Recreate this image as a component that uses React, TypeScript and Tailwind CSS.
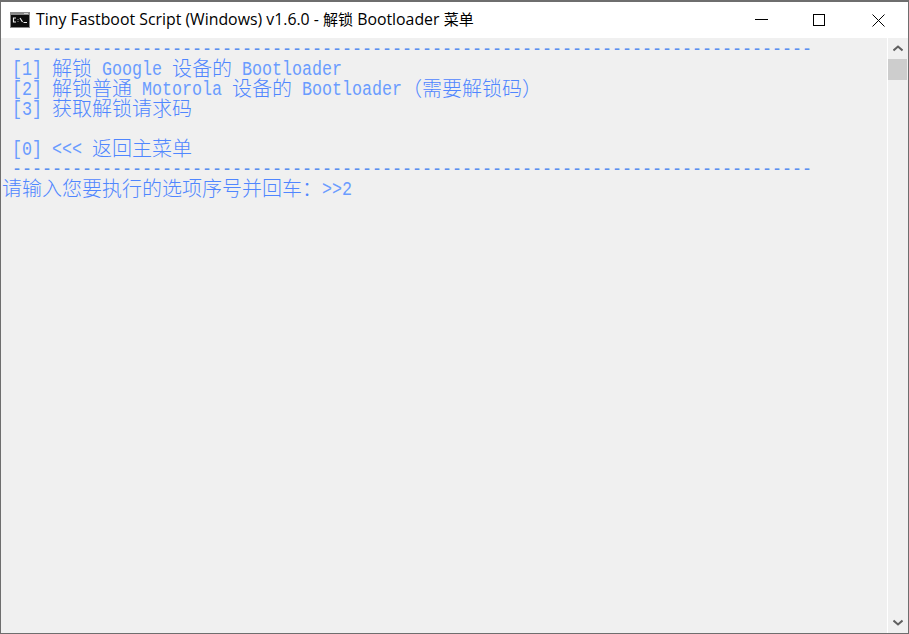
import React from "react";

const DASHES = "-".repeat(80);

// console font has half width latin (10px) and full width CJK (20px) cells,
// so the latin runs get squeezed from 12px to 10px per char
function Seg({ t }: { t: string }) {
	const parts = t.match(/[\u2E80-\uFFEF]+|[^\u2E80-\uFFEF]+/g) || [];
	return (
		<>
			{parts.map((p, i) =>
				/[\u2E80-\uFFEF]/.test(p) ? (
					<span
						key={i}
						className="inline-block align-top h-5 leading-[18px] text-[20px] text-[#4f86ff] font-['Noto_Sans_CJK_SC',sans-serif] font-light"
					>
						{p}
					</span>
				) : (
					<span
						key={i}
						className="inline-block align-top h-5 leading-5"
						style={{ width: p.length * 10 }}
					>
						<span
							className={`inline-block h-5 origin-left scale-x-[0.8333] text-[20px] font-['Liberation_Mono',monospace] ${
								p.includes("--") ? "leading-4 text-[#5c90f0]" : "leading-5"
							}`}
						>
							{p}
						</span>
					</span>
				)
			)}
		</>
	);
}

function Line({ t }: { t: string }) {
	return (
		<div className="h-5 leading-5 whitespace-pre">
			<Seg t={t} />
		</div>
	);
}

function CmdIcon() {
	return (
		<svg width="20" height="16" viewBox="0 0 20 16" className="shrink-0">
			<rect width="20" height="16" fill="#8a8a8a" />
			<rect x="1" y="3" width="18" height="12" fill="#0c0c0c" />
			<rect x="14" y="1" width="4" height="1" fill="#d0d0d0" />
			<path d="M6 6H3.5V10H6M8 7V7.5M8 9.5V10M10 6L12.5 10M13.5 10.5H17" fill="none" stroke="#f0f0f0" strokeWidth="1.2" />
		</svg>
	);
}

export default function App() {
	return (
		<div className="w-[909px] h-[634px] flex flex-col border border-t-2 border-[#6e6e6e] bg-white overflow-hidden">
			<div className="h-9 shrink-0 flex items-center bg-white pl-[9px]">
				<CmdIcon />
				<div className="ml-[6px] text-[15.85px] text-black whitespace-pre font-['Open_Sans',sans-serif]">
					Tiny Fastboot Script (Windows) v1.6.0 -{" "}
					<span className="text-[15px] font-['Noto_Sans_CJK_SC',sans-serif]">解锁</span> Bootloader{" "}
					<span className="text-[15px] font-['Noto_Sans_CJK_SC',sans-serif]">菜单</span>
				</div>
				<div className="ml-auto flex items-center">
					<svg width="13" height="2" viewBox="0 0 13 2" className="mr-[45px]">
						<rect width="13" height="1" fill="#000" />
					</svg>
					<svg width="13" height="13" viewBox="0 0 13 13" className="mr-[46px]">
						<rect x="0.5" y="0.5" width="11" height="11" fill="none" stroke="#000" />
					</svg>
					<svg width="13" height="13" viewBox="0 0 13 13" className="mr-[23px]">
						<path d="M0.5 0.5L12.5 12.5M12.5 0.5L0.5 12.5" stroke="#000" fill="none" />
					</svg>
				</div>
			</div>
			<div className="flex-1 flex min-h-0 bg-[#f0f0f0]">
				<div className="flex-1 pt-px pl-px text-[#6a9cff]">
					<Line t={" " + DASHES} />
					<Line t={" [1] 解锁 Google 设备的 Bootloader"} />
					<Line t={" [2] 解锁普通 Motorola 设备的 Bootloader（需要解锁码）"} />
					<Line t={" [3] 获取解锁请求码"} />
					<Line t="" />
					<Line t={" [0] <<< 返回主菜单"} />
					<Line t={" " + DASHES} />
					<Line t="请输入您要执行的选项序号并回车：>>2" />
				</div>
				<div className="w-[21px] shrink-0 flex flex-col items-center justify-between border-l border-white pr-px pb-[7px]">
					<div className="w-full flex flex-col items-center">
						<svg width="10" height="7" viewBox="0 0 10 7" className="mt-[7px]">
							<path d="M0.5 5.5L5 1.5L9.5 5.5" fill="none" stroke="#606060" strokeWidth="2" />
						</svg>
						<div className="w-full h-[21px] mt-[7px] bg-[#cdcdcd]" />
					</div>
					<svg width="10" height="7" viewBox="0 0 10 7">
						<path d="M0.5 1.5L5 5.5L9.5 1.5" fill="none" stroke="#606060" strokeWidth="2" />
					</svg>
				</div>
			</div>
		</div>
	);
}
